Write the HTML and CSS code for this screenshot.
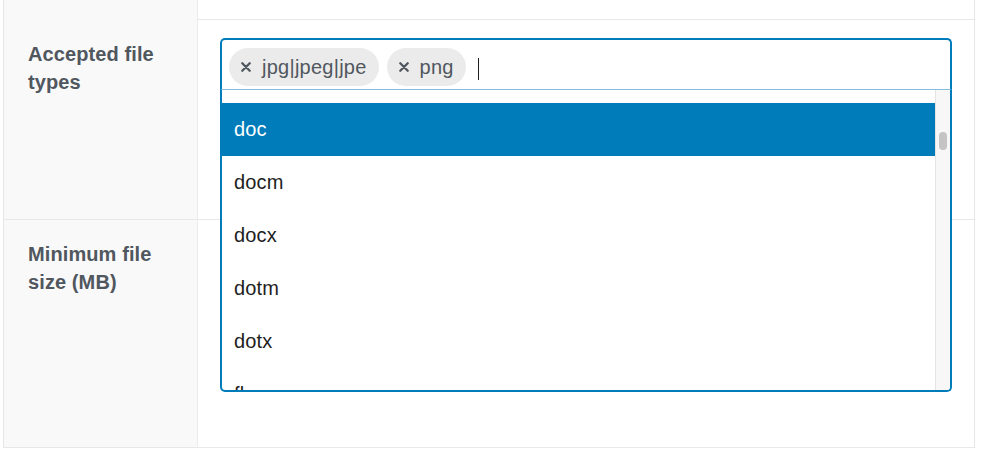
FILE: index.html
```html
<!DOCTYPE html>
<html lang="en">
<head>
<meta charset="utf-8">
<title>File field settings</title>
<link rel="stylesheet" href="styles.css">
</head>
<body>
<div class="form-table">
  <div class="row row-top">
    <div class="th"></div>
    <div class="td"></div>
  </div>
  <div class="row row-types">
    <div class="th">Accepted file types</div>
    <div class="td">
      <div class="select">
        <div class="selection">
          <span class="chip"><svg class="chip-x" width="10" height="10" viewBox="0 0 10 10"><path d="M1.3 1.3 L8.7 8.7 M8.7 1.3 L1.3 8.7" stroke="#50575e" stroke-width="2.3" stroke-linecap="round"/></svg><span>jpg|jpeg|jpe</span></span>
          <span class="chip"><svg class="chip-x" width="10" height="10" viewBox="0 0 10 10"><path d="M1.3 1.3 L8.7 8.7 M8.7 1.3 L1.3 8.7" stroke="#50575e" stroke-width="2.3" stroke-linecap="round"/></svg><span>png</span></span>
          <span class="caret"></span>
        </div>
        <div class="dropdown">
          <ul class="options">
            <li class="option is-highlighted">doc</li>
            <li class="option">docm</li>
            <li class="option">docx</li>
            <li class="option">dotm</li>
            <li class="option">dotx</li>
            <li class="option">flac</li>
          </ul>
          <div class="scrollbar"><div class="thumb"></div></div>
        </div>
      </div>
    </div>
  </div>
  <div class="row row-min">
    <div class="th">Minimum file size (MB)</div>
    <div class="td"></div>
  </div>
</div>
</body>
</html>
```

FILE: styles.css
```css
* { box-sizing: border-box; }

html, body {
  margin: 0;
  padding: 0;
  background: #ffffff;
}

body {
  font-family: "Liberation Sans", Arial, sans-serif;
  color: #1e1e1e;
}

.form-table {
  margin-left: 3px;
  width: 972px;
  border-left: 1px solid #e6e6e6;
  border-right: 1px solid #e6e6e6;
}

.row {
  display: grid;
  grid-template-columns: 194px 1fr;
  border-bottom: 1px solid #e8e8e8;
}

.row-top { height: 20px; }
.row-types { height: 200px; }
.row-min { height: 228px; }

.th {
  background: #f9f9f9;
  border-right: 1px solid #ececec;
  padding: 20px 10px 0 24px;
  font-size: 20px;
  font-weight: 700;
  line-height: 28px;
  color: #50575e;
  letter-spacing: 0.1px;
}

.td {
  padding: 18px 0 0 22px;
  position: relative;
}

.select {
  position: relative;
  width: 732px;
  z-index: 2;
}

.selection {
  height: 52px;
  border: 2px solid #007cba;
  border-bottom: 1px solid #86bddf;
  border-radius: 5px 5px 0 0;
  padding: 8px 7px 0;
  display: flex;
  align-items: flex-start;
  gap: 8px;
  background: #fff;
}

.chip {
  height: 38px;
  padding: 0 12px;
  border-radius: 19px;
  background: #ebebeb;
  color: #50575e;
  font-size: 20px;
  letter-spacing: 0.25px;
  display: inline-flex;
  align-items: center;
  gap: 11px;
  white-space: nowrap;
}

.chip-x { flex: none; }

.caret {
  width: 1px;
  height: 22px;
  margin: 10px 0 0 4px;
  background: #1e1e1e;
}

.dropdown {
  position: absolute;
  top: 100%;
  left: 0;
  width: 732px;
  height: 302px;
  border: 2px solid #007cba;
  border-top: 0;
  border-radius: 0 0 5px 5px;
  background: #fff;
  overflow: hidden;
  display: flex;
}

.options {
  list-style: none;
  margin: 0;
  padding: 13px 0 0;
  flex: 1;
  min-width: 0;
}

.option {
  height: 53px;
  padding: 0 12px;
  display: flex;
  align-items: center;
  font-size: 20px;
  letter-spacing: 0.15px;
  color: #1e1e1e;
}

.option.is-highlighted {
  background: #007cba;
  color: #ffffff;
}

.scrollbar {
  flex: none;
  width: 15px;
  background: #f7f7f7;
  border-left: 1px solid #e4e4e4;
  position: relative;
}

.thumb {
  position: absolute;
  top: 42px;
  left: 3px;
  width: 8px;
  height: 18px;
  border-radius: 4px;
  background: #c4c4c4;
}
```
